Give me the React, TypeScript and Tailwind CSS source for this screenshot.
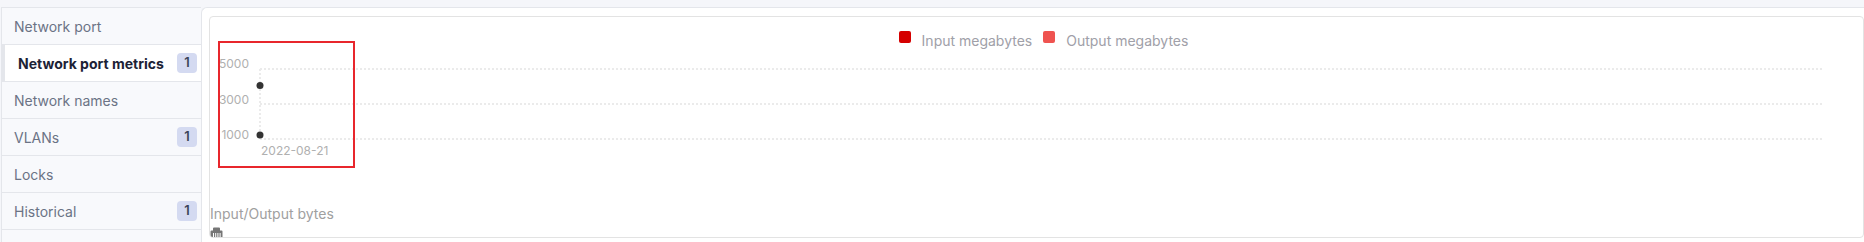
import React from 'react';

type Tab = { label: string; count?: number; active?: boolean };

const tabs: Tab[] = [
  { label: 'Network port' },
  { label: 'Network port metrics', count: 1, active: true },
  { label: 'Network names' },
  { label: 'VLANs', count: 1 },
  { label: 'Locks' },
  { label: 'Historical', count: 1 },
];

const gridYs = [18, 53, 88];

// ethernet port glyph, only its top shows above the card edge
const PortIcon = () => (
  <svg width="13" height="13" viewBox="0 0 13 13" className="block">
    <path d="M0.5 13 V4.5 Q0.5 3.5 1.5 3.5 H3 V1.5 Q3 0.5 4 0.5 H9 Q10 0.5 10 1.5 V3.5 H11.5 Q12.5 3.5 12.5 4.5 V13 Z" fill="#767676" />
    <rect x="3" y="6" width="1" height="7" fill="#ffffff" />
    <rect x="5.2" y="6" width="1" height="7" fill="#ffffff" />
    <rect x="7.4" y="6" width="1" height="7" fill="#ffffff" />
    <rect x="9.6" y="6" width="1" height="7" fill="#ffffff" />
  </svg>
);

const Chart = () => (
  <svg width="1652" height="120" viewBox="0 0 1652 120" className="block shrink-0">
    {gridYs.map((y) => (
      <line key={y} x1="50" y1={y} x2="1612" y2={y} stroke="#ebebeb" strokeWidth="2" strokeDasharray="2 2" />
    ))}
    <line x1="50" y1="18" x2="50" y2="88" stroke="#ebebeb" strokeWidth="2" strokeDasharray="2 2" />
    <g fill="#b0b0b0" fontSize="12" fontFamily="Inter, sans-serif" textAnchor="end">
      <text x="39" y="16.5">5000</text>
      <text x="39" y="52.5">3000</text>
      <text x="39" y="87.5">1000</text>
    </g>
    <circle cx="50" cy="34.5" r="3.5" fill="#333333" />
    <circle cx="50" cy="84" r="3.5" fill="#333333" />
    <text x="51" y="103.5" fill="#b0b0b0" fontSize="12" fontFamily="Inter, sans-serif">
      2022-08-21
    </text>
  </svg>
);

export default function App() {
  return (
    <div className="w-[1864px] h-[242px] overflow-hidden bg-[#f5f6fa] pt-[7px] flex font-['Inter',sans-serif]">
      {/* Sidebar tabs */}
      <div className="ml-px w-[200px] shrink-0 border-l border-t border-[#e4e6eb] bg-[#f8f9fc] flex flex-col">
        {tabs.map((t) => (
          <div
            key={t.label}
            className={`h-[37px] shrink-0 flex items-center justify-between border-b border-[#e4e6eb] pr-[4px] ${
              t.active ? 'bg-white border-l-[4px] -ml-px pl-[13px]' : 'pl-[12px]'
            }`}
          >
            <span
              className={`text-[14px] ${t.active ? 'font-bold text-[#1c2236]' : 'text-[#6b7385]'}`}
            >
              {t.label}
            </span>
            {t.count && (
              <span className="w-[20px] h-[20px] rounded-[4px] bg-[#d4daf1] text-[#3c4559] text-[13px] font-semibold flex items-center justify-center">
                {t.count}
              </span>
            )}
          </div>
        ))}
      </div>

      {/* Main panel */}
      <div className="flex-1 bg-white border-l border-t border-[#e4e6eb] rounded-tl-[6px] pl-[7px] pt-[8px] flex items-start">
        <div className="relative flex-1 h-[222px] border border-[#e3e3e3] rounded-[4px] overflow-hidden flex flex-col">
          {/* Legend */}
          <div className="shrink-0 mt-[14px] pl-[14px] flex justify-center items-start gap-[11px]">
            <div className="flex items-start gap-[11px]">
              <span className="w-[12px] h-[12px] rounded-[2px] bg-[#d50000]" />
              <span className="text-[14px] leading-[20px] text-[#a0a0a8]">Input megabytes</span>
            </div>
            <div className="flex items-start gap-[11px]">
              <span className="w-[12px] h-[12px] rounded-[2px] bg-[#ef5350]" />
              <span className="text-[14px] leading-[20px] text-[#a0a0a8]">Output megabytes</span>
            </div>
          </div>

          <Chart />

          <div className="shrink-0 mt-[33px] text-[14px] leading-[20px] text-[#a0a0a0]">Input/Output bytes</div>
          <div className="shrink-0 mt-[3px]">
            <PortIcon />
          </div>

          {/* Highlight box */}
          <div className="absolute left-[8px] top-[24px] w-[137px] h-[127px] border-2 border-[#e8262c]" />
        </div>
      </div>
    </div>
  );
}
